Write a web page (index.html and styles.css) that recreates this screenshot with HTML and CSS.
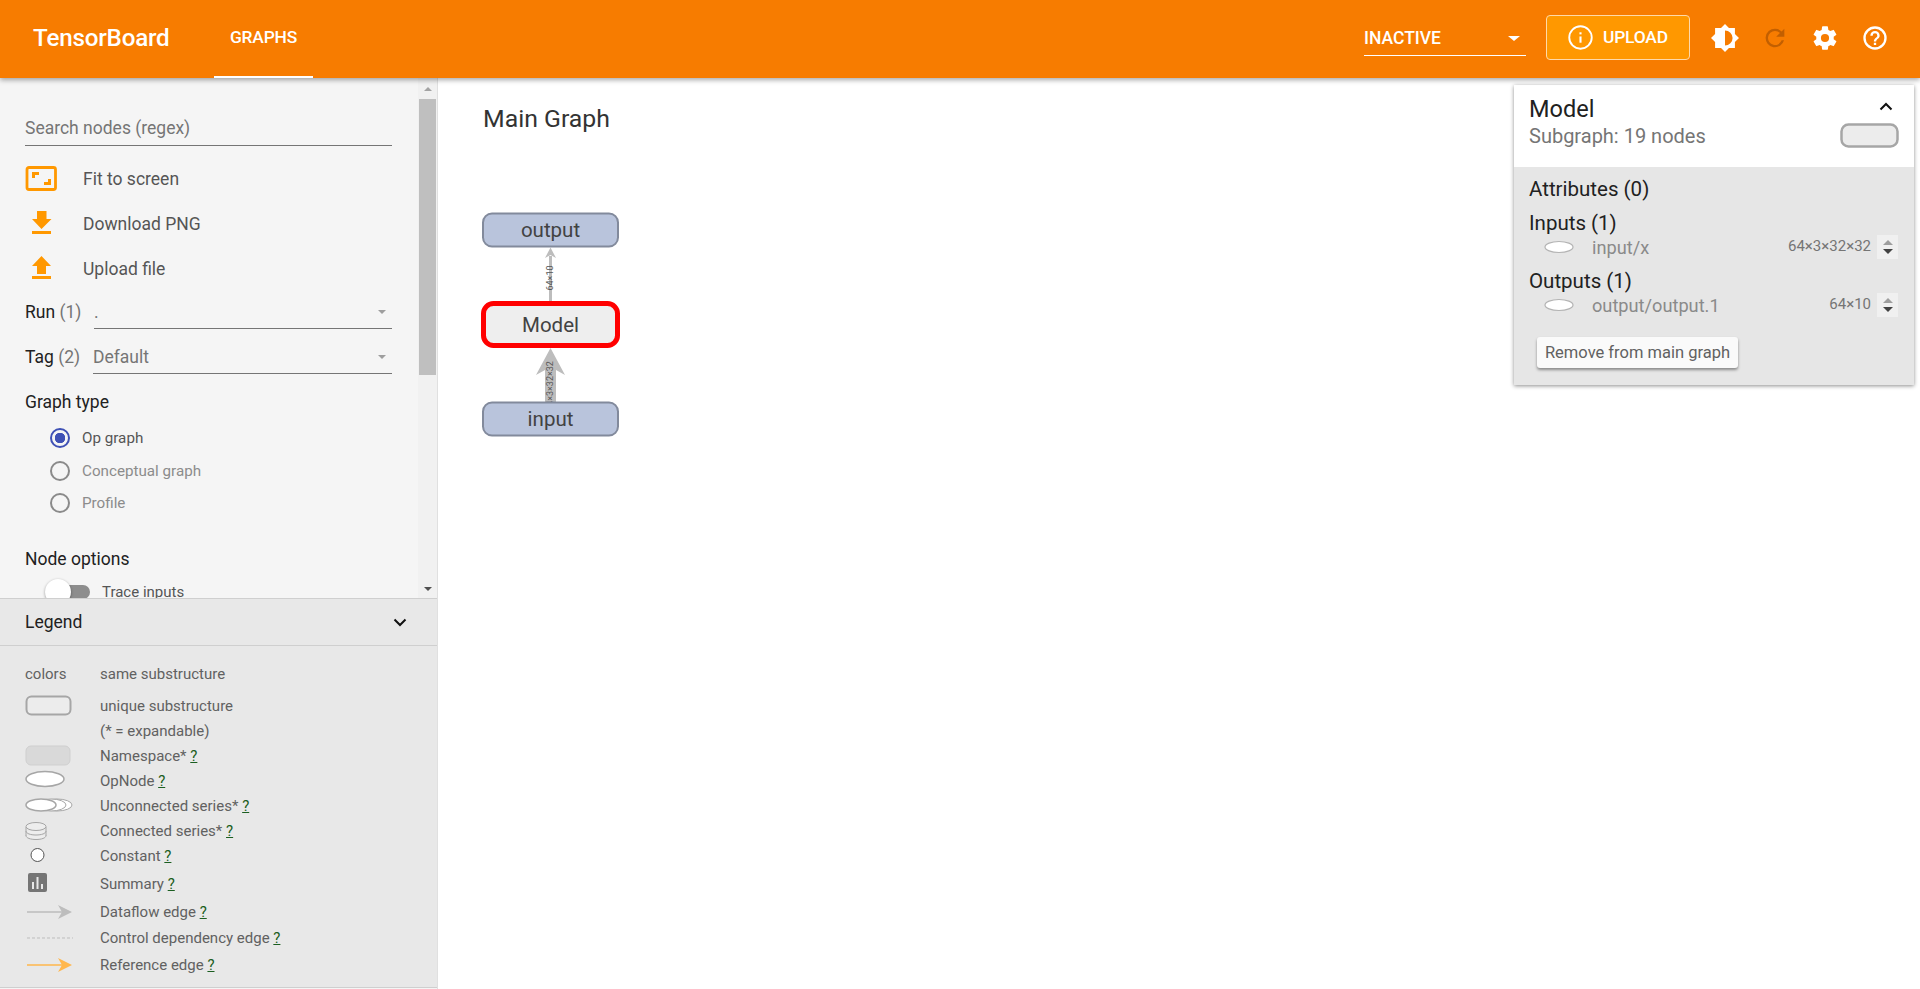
FILE: index.html
```html
<!DOCTYPE html>
<html lang="en">
<head>
<meta charset="utf-8">
<title>TensorBoard</title>
<link rel="stylesheet" href="styles.css">
</head>
<body>
<header class="topbar">
  <div class="brand">TensorBoard</div>
  <nav class="tabs"><div class="tab">GRAPHS</div></nav>
  <div class="top-actions">
    <div class="reload-select"><span>INACTIVE</span><i class="caret caret-white"></i></div>
    <div class="upload">
      <svg class="upload-icon" viewBox="0 0 24 24"><circle cx="12" cy="12" r="10.800" fill="none" stroke="#fff" stroke-width="1.800"/><rect x="11" y="11" width="2" height="6" fill="#fff"/><rect x="11" y="7" width="2" height="2" fill="#fff"/></svg>
      <span>UPLOAD</span>
    </div>
    <svg class="act" viewBox="0 0 24 24"><path fill="#fff" d="M12 0l3.400 3.500h5.100v5.100L24 12l-3.500 3.400v5.100h-5.100L12 24l-3.400-3.500H3.500v-5.100L0 12l3.500-3.400V3.500h5.100zM12 5.500v13a6.500 6.500 0 0 0 0-13z"/></svg>
    <svg class="act dim" viewBox="0 0 24 24"><path fill="#c25f00" d="M17.650 6.350A7.960 7.960 0 0 0 12 4a8 8 0 1 0 7.730 10h-2.080A6 6 0 1 1 12 6c1.660 0 3.140.69 4.220 1.780L13 11h7V4z"/></svg>
    <svg class="act" viewBox="0 0 24 24"><path fill="#fff" d="M19.430 12.980c.04-.32.070-.64.070-.98s-.03-.66-.07-.98l2.110-1.650a.5.5 0 0 0 .12-.64l-2-3.460a.5.5 0 0 0-.61-.22l-2.490 1a7.300 7.300 0 0 0-1.690-.98l-.38-2.650A.49.490 0 0 0 14 2h-4a.49.490 0 0 0-.49.420l-.38 2.650c-.61.250-1.170.59-1.690.98l-2.490-1a.49.490 0 0 0-.61.220l-2 3.460a.49.490 0 0 0 .12.640l2.110 1.650c-.04.320-.07.650-.07.980s.03.660.07.980l-2.110 1.650a.5.5 0 0 0-.12.640l2 3.460c.12.220.39.300.61.220l2.490-1c.52.400 1.080.730 1.690.98l.38 2.650c.03.240.24.420.49.420h4c.25 0 .46-.18.490-.42l.38-2.650c.61-.25 1.170-.59 1.690-.98l2.490 1c.23.090.49 0 .61-.22l2-3.460a.5.5 0 0 0-.12-.64zM12 15.500a3.500 3.500 0 1 1 0-7 3.500 3.500 0 0 1 0 7z"/></svg>
    <svg class="act" viewBox="0 0 24 24"><path fill="#fff" d="M11 18h2v-2h-2zm1-16a10 10 0 1 0 0 20 10 10 0 0 0 0-20zm0 18a8 8 0 1 1 0-16 8 8 0 0 1 0 16zm0-14a4 4 0 0 0-4 4h2a2 2 0 1 1 4 0c0 2-3 1.750-3 5h2c0-2.250 3-2.500 3-5a4 4 0 0 0-4-4z"/></svg>
  </div>
</header>

<main class="layout">
  <aside class="sidebar">
    <div class="controls-wrap">
      <div class="controls">
        <div class="search">Search nodes (regex)</div>
        <div class="tool-row">
          <svg class="tool-icon" viewBox="0 0 32 26"><rect x="2" y="1.500" width="28.500" height="22" rx="2" fill="none" stroke="#ff9800" stroke-width="2.800"/><path fill="#ff9800" d="M7 6h7v3H10v3H7zM26 19h-7v-3h4v-3h3z"/></svg>
          <span>Fit to screen</span>
        </div>
        <div class="tool-row">
          <svg class="tool-icon" viewBox="0 0 32 26"><path fill="#ff9800" d="M12 0h9.500v8h5L16.500 18 7 8h5zM7 20h19v3H7z"/></svg>
          <span>Download PNG</span>
        </div>
        <div class="tool-row">
          <svg class="tool-icon" viewBox="0 0 32 26"><path fill="#ff9800" d="M16.500 0L26 10h-5v8h-9v-8H7zM7 20h19v3H7z"/></svg>
          <span>Upload file</span>
        </div>
        <div class="select-row run-row">
          <div class="select-label">Run <span class="count">(1)</span></div>
          <div class="select-value"><span>.</span><i class="caret caret-gray"></i></div>
        </div>
        <div class="select-row">
          <div class="select-label">Tag <span class="count">(2)</span></div>
          <div class="select-value tag-value"><span>Default</span><i class="caret caret-gray"></i></div>
        </div>
        <div class="section-title graph-type">Graph type</div>
        <div class="radio-row on"><i class="radio"></i><span>Op graph</span></div>
        <div class="radio-row"><i class="radio"></i><span>Conceptual graph</span></div>
        <div class="radio-row"><i class="radio"></i><span>Profile</span></div>
        <div class="section-title node-options">Node options</div>
        <div class="toggle-row"><i class="toggle"></i><span>Trace inputs</span></div>
      </div>
      <div class="scrollbar">
        <i class="sb-up"></i>
        <div class="sb-track"><div class="sb-thumb"></div></div>
        <i class="sb-down"></i>
      </div>
    </div>
    <section class="legend">
      <div class="legend-head"><span>Legend</span>
        <svg class="chev" viewBox="0 0 14 9"><path d="M1.500 1.500L7 7l5.500-5.500" fill="none" stroke="#111" stroke-width="2"/></svg>
      </div>
      <div class="legend-body">
        <div class="lg-row r-colors"><div class="lg-key">colors</div><div>same substructure</div></div>
        <div class="lg-row r-unique"><div class="lg-key"><svg width="47" height="22" viewBox="0 0 47 22"><rect x="1.500" y="1.500" width="44" height="18" rx="5" fill="#ececec" stroke="#a6a6a6" stroke-width="2"/></svg></div><div>unique substructure</div></div>
        <div class="lg-row"><div class="lg-key"></div><div>(* = expandable)</div></div>
        <div class="lg-row"><div class="lg-key"><svg width="47" height="22" viewBox="0 0 47 22"><rect x="1" y="1" width="44" height="19" rx="5" fill="#d9d9d9" stroke="#cfcfcf" stroke-width="1"/></svg></div><div>Namespace* <a class="q">?</a></div></div>
        <div class="lg-row"><div class="lg-key"><svg width="47" height="22" viewBox="0 0 47 22"><ellipse cx="20" cy="9" rx="19" ry="7.500" fill="#fff" stroke="#a6a6a6" stroke-width="1.500"/></svg></div><div>OpNode <a class="q">?</a></div></div>
        <div class="lg-row"><div class="lg-key"><svg width="49" height="22" viewBox="0 0 49 22"><ellipse cx="32" cy="10" rx="15" ry="6" fill="#fff" stroke="#a6a6a6"/><ellipse cx="26" cy="10" rx="15" ry="6" fill="#fff" stroke="#a6a6a6"/><ellipse cx="16" cy="10" rx="15" ry="6" fill="#fff" stroke="#a6a6a6" stroke-width="1.500"/></svg></div><div>Unconnected series* <a class="q">?</a></div></div>
        <div class="lg-row"><div class="lg-key"><svg width="47" height="22" viewBox="0 0 47 22"><path d="M1 15.500c0 2.500 4.500 4 10 4s10-1.500 10-4M1 11c0 2.500 4.500 4 10 4s10-1.500 10-4" fill="#ededed" stroke="#a6a6a6"/><path d="M1 7v9M21 7v9" stroke="#a6a6a6" fill="none"/><ellipse cx="11" cy="6.500" rx="10" ry="4" fill="#ededed" stroke="#a6a6a6"/></svg></div><div>Connected series* <a class="q">?</a></div></div>
        <div class="lg-row"><div class="lg-key"><svg width="47" height="22" viewBox="0 0 47 22"><circle cx="12.500" cy="10" r="6.500" fill="#fff" stroke="#555" stroke-width="1"/></svg></div><div>Constant <a class="q">?</a></div></div>
        <div class="lg-row r-summary"><div class="lg-key"><svg width="47" height="22" viewBox="0 0 47 22"><rect x="3" y="0" width="19" height="19" rx="2" fill="#757575"/><path fill="#e8e8e8" d="M7 9h2v7H7zM11.500 4h2v12h-2zM16 11h2v5h-2z"/></svg></div><div>Summary <a class="q">?</a></div></div>
        <div class="lg-row r-edge"><div class="lg-key"><svg width="50" height="22" viewBox="0 0 50 22"><path d="M2 11h36" stroke="#bdbdbd" stroke-width="1.500"/><path d="M33 4l14 7-14 7 4-7z" fill="#bdbdbd"/></svg></div><div>Dataflow edge <a class="q">?</a></div></div>
        <div class="lg-row r-ctrl"><div class="lg-key"><svg width="50" height="22" viewBox="0 0 50 22"><path d="M2 11h46" stroke="#bdbdbd" stroke-width="1" stroke-dasharray="3 2"/></svg></div><div>Control dependency edge <a class="q">?</a></div></div>
        <div class="lg-row r-ref"><div class="lg-key"><svg width="50" height="22" viewBox="0 0 50 22"><path d="M2 11h36" stroke="#ffb74d" stroke-width="1.500"/><path d="M33 4l14 7-14 7 4-7z" fill="#ffb74d"/></svg></div><div>Reference edge <a class="q">?</a></div></div>
      </div>
    </section>
  </aside>

  <section class="canvas">
    <div class="main-title">Main Graph</div>
    <svg class="graph" width="180" height="250" viewBox="0 0 180 250">
      <path d="M90.500 56v46" stroke="#bdbdbd" stroke-width="3"/>
      <path d="M90.500 47.500L96 58l-5.500-3-5.500 3z" fill="#bdbdbd"/>
      <text class="edge-label" transform="translate(92.500 78) rotate(-90)" text-anchor="middle">64×10</text>
      <path d="M90.500 148L105 175l-9-5v32H85v-32l-9 5z" fill="#bdbdbd"/>
      <text class="edge-label" transform="translate(92.500 186) rotate(-90)" text-anchor="middle">64×3×32×32</text>
      <rect x="23" y="13.500" width="135" height="33" rx="9" fill="#b9c4dc" stroke="#828a9c" stroke-width="2"/>
      <text class="node-text" x="90.500" y="36.500" text-anchor="middle">output</text>
      <rect x="23.500" y="103.500" width="134" height="42" rx="10" fill="#eeeeee" stroke="#ff0000" stroke-width="5"/>
      <text class="node-text" x="90.500" y="131.500" text-anchor="middle">Model</text>
      <rect x="23" y="202.500" width="135" height="33" rx="9" fill="#b9c4dc" stroke="#828a9c" stroke-width="2"/>
      <text class="node-text" x="90.500" y="226" text-anchor="middle">input</text>
    </svg>

    <aside class="info-card">
      <div class="info-head">
        <div class="info-title-row"><span class="info-title">Model</span>
          <svg class="chev-up" viewBox="0 0 14 9"><path d="M1.500 7.500L7 2l5.500 5.500" fill="none" stroke="#111" stroke-width="2"/></svg>
        </div>
        <div class="info-sub-row"><span>Subgraph: 19 nodes</span>
          <svg class="sub-chip" width="59" height="26" viewBox="0 0 59 26"><rect x="1.500" y="1.500" width="56" height="22" rx="7" fill="#ececec" stroke="#a6a6a6" stroke-width="2.500"/></svg>
        </div>
      </div>
      <div class="info-body">
        <div class="info-section">Attributes (0)</div>
        <div class="info-section gap">Inputs (1)</div>
        <div class="io-row">
          <svg class="io-icon" width="30" height="14" viewBox="0 0 30 14"><ellipse cx="15" cy="7" rx="14" ry="5.500" fill="#fff" stroke="#b3b3b3" stroke-width="1.200"/></svg>
          <span class="io-name">input/x</span><span class="io-shape">64×3×32×32</span>
          <span class="spin"><i class="sp-up"></i><i class="sp-down"></i></span>
        </div>
        <div class="info-section gap2">Outputs (1)</div>
        <div class="io-row">
          <svg class="io-icon" width="30" height="14" viewBox="0 0 30 14"><ellipse cx="15" cy="7" rx="14" ry="5.500" fill="#fff" stroke="#b3b3b3" stroke-width="1.200"/></svg>
          <span class="io-name">output/output.1</span><span class="io-shape">64×10</span>
          <span class="spin"><i class="sp-up"></i><i class="sp-down"></i></span>
        </div>
        <button class="remove">Remove from main graph</button>
      </div>
    </aside>
  </section>
</main>
</body>
</html>
```

FILE: styles.css
```css
* { box-sizing: border-box; }
html, body { margin: 0; height: 100%; overflow: hidden; }
body { font-family: Roboto, "Liberation Sans", sans-serif; background: #fff; color: #212121; display: flex; flex-direction: column; height: 989px; }

.topbar { height: 78px; flex: none; background: #f77c00; color: #fff; display: flex; align-items: stretch; box-shadow: 0 2px 5px rgba(0,0,0,.35); position: relative; z-index: 3; }
.brand { font-size: 24.200px; font-weight: 500; margin-left: 33px; width: 181px; line-height: 76px; letter-spacing: -.2px; }
.tabs { display: flex; }
.tab { width: 99px; text-align: center; font-size: 17.400px; font-weight: 500; line-height: 75px; border-bottom: 2px solid #fff; letter-spacing: -.2px; }
.top-actions { margin-left: auto; display: flex; align-items: center; padding-right: 31px; }
.reload-select { width: 162px; height: 28px; margin-top: 5px; padding-bottom: 6px; border-bottom: 1px solid #fff; font-size: 17.500px; font-weight: 500; display: flex; align-items: center; justify-content: space-between; padding-right: 6px; margin-right: 20px; }
.caret { display: block; width: 0; height: 0; border-left: 5px solid transparent; border-right: 5px solid transparent; }
.caret-white { border-top: 5px solid #fff; border-left-width: 6px; border-right-width: 6px; }
.caret-gray { border-top: 4px solid #9e9e9e; border-left-width: 4px; border-right-width: 4px; }
.upload { width: 144px; height: 45px; margin-bottom: 4px; background: #ff9800; border: 1px solid #ffd9a8; border-radius: 4px; display: flex; align-items: center; padding-left: 21px; gap: 10px; font-size: 17.400px; font-weight: 500; margin-right: 21px; letter-spacing: -.2px; }
.upload-icon { width: 25px; height: 25px; flex: none; }
.act { width: 28px; height: 28px; margin-right: 22px; margin-bottom: 2px; }
.act:last-child { margin-right: 0; }

.layout { flex: 1; display: flex; min-height: 0; }
.sidebar { width: 438px; flex: none; display: flex; flex-direction: column; background: #f5f5f5; border-right: 1px solid #e0e0e0; }
.controls-wrap { height: 520px; display: flex; flex: none; overflow: hidden; }
.controls { flex: 1; padding: 0 0 0 25px; min-width: 0; }
.search { margin-top: 34px; width: 367px; height: 34px; padding-top: 6px; font-size: 17.500px; line-height: 20px; color: #757575; border-bottom: 1px solid #757575; }
.tool-row { display: flex; align-items: center; height: 45px; width: 367px; font-size: 17.500px; color: #555; }
.search + .tool-row { margin-top: 10px; }
.tool-icon { width: 32px; height: 26px; margin-right: 26px; flex: none; }
.select-row { display: flex; align-items: flex-end; width: 367px; height: 45px; font-size: 17.500px; }
.run-row { margin-top: 1px; height: 37px; }
.select-label { width: 69px; flex: none; padding-bottom: 7px; color: #212121; white-space: nowrap; }
.count { color: #757575; }
.select-value { flex: 1; display: flex; justify-content: space-between; align-items: center; height: 32px; border-bottom: 1px solid #757575; color: #757575; padding: 0 6px 1px 0; }
.tag-value { margin-left: -1px; }
.section-title { font-size: 17.500px; color: #212121; line-height: 20px; }
.graph-type { margin-top: 18px; }
.radio-row { display: flex; align-items: center; height: 32.500px; font-size: 15.200px; color: #8c8c8c; padding-left: 25px; }
.graph-type + .radio-row { margin-top: 10px; }
.radio { width: 20px; height: 20px; border-radius: 50%; border: 2px solid #8a8a8a; margin-right: 12px; flex: none; }
.on { color: #555; }
.on .radio { border-color: #3f51b5; background: radial-gradient(circle, #3f51b5 0 5px, transparent 5.500px); }
.node-options { margin-top: 29px; }
.toggle-row { display: flex; align-items: center; margin-top: 9px; padding-left: 20px; font-size: 15px; color: #555; height: 28px; }
.toggle { position: relative; display: block; width: 35px; height: 14px; margin: 0 12px 0 10px; background: #8d8d8d; border-radius: 7px; }
.toggle::before { content: ""; position: absolute; left: -10px; top: -6px; width: 26px; height: 26px; border-radius: 50%; background: #fff; box-shadow: 0 1px 3px rgba(0,0,0,.4); }

.scrollbar { width: 19px; flex: none; display: flex; flex-direction: column; align-items: center; background: #f1f1f1; }
.sb-track { flex: 1; width: 17px; }
.sb-thumb { width: 17px; height: 276px; background: #bfbfbf; }
.sb-up, .sb-down { display: block; width: 0; height: 0; border-left: 4.500px solid transparent; border-right: 4.500px solid transparent; flex: none; }
.sb-up { border-bottom: 4.500px solid #a3a3a3; margin: 9px 0 7.500px; }
.sb-down { border-top: 4.500px solid #505050; margin: 6px 0 7px; }

.legend { flex: 1; background: #e8e8e8; border-top: 1px solid #cfcfcf; border-bottom: 1px solid #cfcfcf; margin-bottom: 1px; min-height: 0; }
.legend-head { height: 47px; display: flex; align-items: center; justify-content: space-between; padding: 0 30px 0 25px; font-size: 17.500px; color: #212121; border-bottom: 1px solid #cfcfcf; }
.chev { width: 14px; height: 9px; }
.legend-body { padding-top: 15px; font-size: 15px; color: #616161; }
.lg-row { display: flex; align-items: center; height: 25px; padding-left: 25px; }
.lg-key { width: 75px; flex: none; display: flex; align-items: center; height: 22px; }
.r-unique { margin-top: 7px; }
.r-summary { margin-top: 3px; }
.r-edge { margin-top: 3px; }
.r-ctrl { margin-top: 1px; }
.r-ref { margin-top: 2px; }
.q { color: #1b5e20; text-decoration: underline; }

.canvas { flex: 1; position: relative; min-width: 0; }
.main-title { font-size: 24.800px; margin: 26px 0 0 45px; line-height: 30px; color: #333; width: max-content; }
.graph { position: absolute; left: 22px; top: 122px; }
.node-text { font-family: Roboto, sans-serif; font-size: 20.500px; fill: #424242; }
.edge-label { font-family: Roboto, sans-serif; font-size: 9px; fill: #555; }

.info-card { position: absolute; top: 7px; right: 6px; width: 400px; height: 300px; background: #e6e6e6; box-shadow: 0 1px 4px rgba(0,0,0,.45); }
.info-head { height: 82px; background: #fff; padding: 10px 16px 0 15px; }
.info-title-row { display: flex; justify-content: space-between; align-items: center; height: 28px; }
.info-title { font-size: 23.500px; color: #212121; }
.chev-up { width: 14px; height: 9px; margin-right: 5px; margin-top: -6px; }
.info-sub-row { display: flex; justify-content: space-between; align-items: center; font-size: 20px; color: #757575; height: 26px; }
.sub-chip { margin-right: -1px; }
.info-body { padding: 10px 16px 0 15px; }
.info-section { font-size: 20.500px; line-height: 24px; color: #212121; }
.gap { margin-top: 10px; }
.gap2 { margin-top: 10px; }
.io-row { display: flex; align-items: center; height: 24px; color: #8a8a8a; padding-left: 15px; }
.io-icon { margin-right: 18px; flex: none; }
.io-name { flex: 1; font-size: 18.200px; }
.io-shape { font-size: 15px; color: #757575; margin-right: 6px; margin-top: -3px; }
.spin { width: 21px; height: 24px; background: #f0f0f0; display: flex; flex-direction: column; align-items: center; justify-content: center; gap: 4px; }
.sp-up, .sp-down { display: block; width: 0; height: 0; border-left: 5px solid transparent; border-right: 5px solid transparent; }
.sp-up { border-bottom: 5px solid #9e9e9e; }
.sp-down { border-top: 5px solid #424242; }
.remove { display: block; margin: 20px 0 0 8px; width: 201px; height: 31px; padding: 0; border: none; border-radius: 3px; background: #fafafa; font: 400 16.500px Roboto, sans-serif; color: #616161; box-shadow: 0 2px 3px rgba(0,0,0,.4); }
```
